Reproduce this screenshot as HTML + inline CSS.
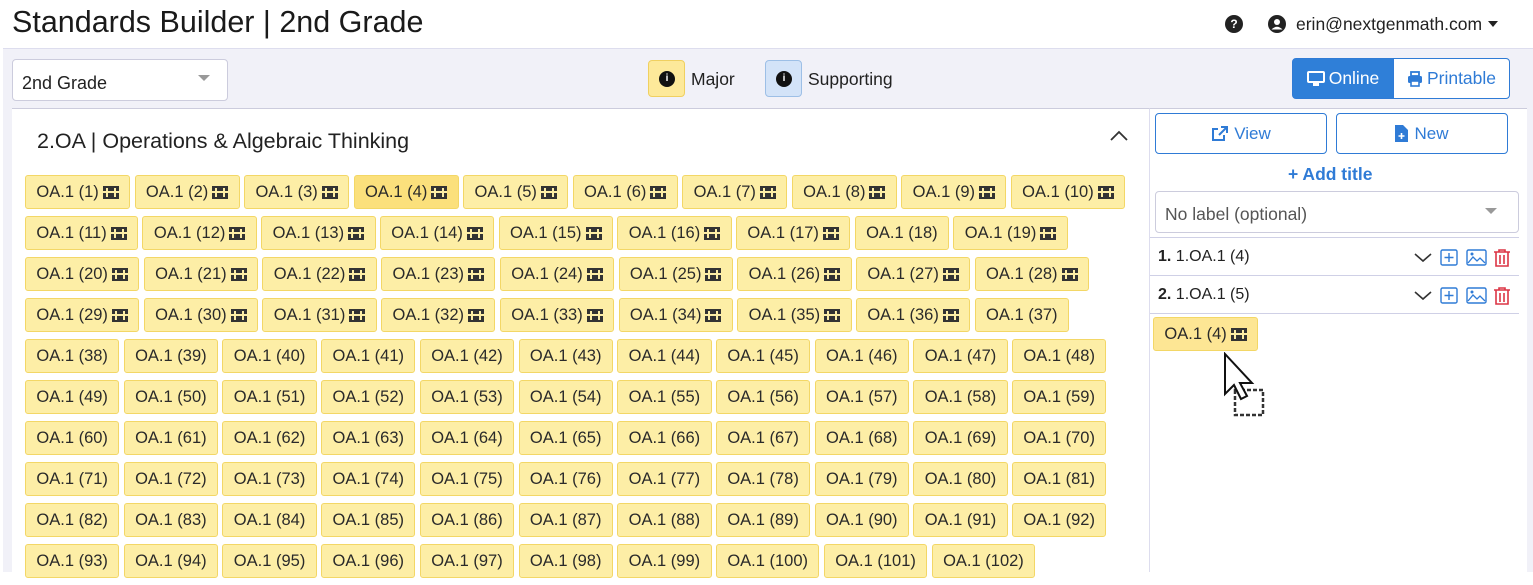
<!DOCTYPE html>
<html><head><meta charset="utf-8"><style>
*{box-sizing:border-box;margin:0;padding:0}
body{width:1533px;height:572px;overflow:hidden;background:#fff;font-family:"Liberation Sans",sans-serif;color:#222;position:relative}
.abs{position:absolute}
.top{left:0;top:0;width:1533px;height:48px;background:#fff}
.bar{left:3px;top:48px;width:1530px;height:524px;background:#f1f1f8;border-top:1px solid #dde}
.left{left:12px;top:108px;width:1137px;height:464px;background:#fff;border-top:1px solid #ccd}
.right{left:1149px;top:108px;width:378px;height:464px;background:#fff;border-left:1px solid #dde;border-top:1px solid #ccd}
.chips{position:absolute;left:25px;top:175px;width:1200px}
.r{display:flex;gap:4.4px;margin-bottom:7px;white-space:nowrap}
.c{height:34px;padding:0 10.4px;background:#fdeea6;border:1px solid #f3d766;border-radius:3px;font-size:16.5px;color:#2a2a2a;white-space:nowrap;display:flex;align-items:center}
.c.s{background:#fbe07c}
.f{display:inline-block;width:16px;height:13px;margin-left:4px;background:#333;position:relative}
.f:before{content:"";position:absolute;left:3px;top:2px;width:10px;height:9px;border-left:2px solid #fdeea6;border-right:2px solid #fdeea6;box-sizing:border-box}
.f:after{content:"";position:absolute;left:0;top:5.5px;width:16px;height:2px;background:#fdeea6}
.btn{border:1px solid #2f7bd6;border-radius:4px;color:#2f7bd6;font-size:17px;display:flex;align-items:center;justify-content:center}
.row{left:1150px;width:369px;height:38px;border-bottom:1px solid #cfd0e6;font-size:16px;display:flex;align-items:center;padding-left:8px}
</style></head><body>
<div class="abs top"></div>
<div class="abs" style="left:12px;top:5px;font-size:30.5px;color:#1a1a1a">Standards Builder | 2nd Grade</div>
<div class="abs" style="left:1225px;top:15px;width:18px;height:18px;border-radius:50%;background:#222;color:#fff;font-size:12px;font-weight:bold;text-align:center;line-height:18px">?</div>
<svg class="abs" style="left:1268px;top:15px" width="18" height="18" viewBox="0 0 18 18"><circle cx="9" cy="9" r="9" fill="#222"/><circle cx="9" cy="7" r="3" fill="#fff"/><path d="M3.5 14.5 Q9 9 14.5 14.5" fill="#fff"/></svg>
<div class="abs" style="left:1296px;top:14px;font-size:17.5px;color:#222">erin@nextgenmath.com</div>
<div class="abs" style="left:1488px;top:21px;border-left:5px solid transparent;border-right:5px solid transparent;border-top:6px solid #222"></div>
<div class="abs bar"></div>
<div class="abs" style="left:12px;top:59px;width:216px;height:42px;background:#fff;border:1px solid #ccd;border-radius:4px;font-size:18px;padding:13px 9px">2nd Grade</div>
<div class="abs" style="left:198px;top:75px;border-left:6px solid transparent;border-right:6px solid transparent;border-top:6px solid #999"></div>
<div class="abs" style="left:648px;top:60px;width:37px;height:37px;background:#fde99a;border:1px solid #f0d060;border-radius:4px"></div>
<div class="abs" style="left:659px;top:71px;width:16px;height:16px;border-radius:50%;background:#111;color:#fff;font-size:10px;font-weight:bold;text-align:center;line-height:16px">i</div>
<div class="abs" style="left:691px;top:69px;font-size:17.5px">Major</div>
<div class="abs" style="left:765px;top:60px;width:37px;height:37px;background:#d3e3f8;border:1px solid #9dbfe6;border-radius:4px"></div>
<div class="abs" style="left:776px;top:71px;width:16px;height:16px;border-radius:50%;background:#111;color:#fff;font-size:10px;font-weight:bold;text-align:center;line-height:16px">i</div>
<div class="abs" style="left:808px;top:69px;font-size:17.5px">Supporting</div>
<div class="abs" style="left:1292px;top:58px;width:102px;height:41px;background:#2f7fd8;border:1px solid #2f7bd6;border-radius:4px 0 0 4px;color:#fff;font-size:17.5px;display:flex;align-items:center;justify-content:center"><svg width="18" height="16" viewBox="0 0 18 16" style="margin-right:4px"><rect x="1" y="1" width="16" height="10" rx="1" fill="none" stroke="#fff" stroke-width="2"/><rect x="6" y="12" width="6" height="3" fill="#fff"/></svg>Online</div>
<div class="abs" style="left:1393px;top:58px;width:117px;height:41px;background:#fff;border:1px solid #2f7bd6;border-radius:0 4px 4px 0;color:#2f7bd6;font-size:17.5px;display:flex;align-items:center;justify-content:center"><svg width="16" height="16" viewBox="0 0 16 16" style="margin-right:4px"><rect x="4" y="1" width="8" height="4" fill="none" stroke="#2f7bd6" stroke-width="1.8"/><rect x="1" y="5" width="14" height="7" rx="1.5" fill="#2f7bd6"/><rect x="4" y="10" width="8" height="5" fill="#fff" stroke="#2f7bd6" stroke-width="1.6"/></svg>Printable</div>
<div class="abs left"></div>
<div class="abs right"></div>
<div class="abs" style="left:37px;top:129px;font-size:21.5px;color:#222">2.OA | Operations &amp; Algebraic Thinking</div>
<svg class="abs" style="left:1110px;top:130px" width="18" height="12" viewBox="0 0 18 12"><path d="M1 10 L9 2 L17 10" fill="none" stroke="#333" stroke-width="1.8"/></svg>
<div class="chips">
<div class="r"><div class="c">OA.1 (1)<i class="f"></i></div><div class="c">OA.1 (2)<i class="f"></i></div><div class="c">OA.1 (3)<i class="f"></i></div><div class="c s">OA.1 (4)<i class="f"></i></div><div class="c">OA.1 (5)<i class="f"></i></div><div class="c">OA.1 (6)<i class="f"></i></div><div class="c">OA.1 (7)<i class="f"></i></div><div class="c">OA.1 (8)<i class="f"></i></div><div class="c">OA.1 (9)<i class="f"></i></div><div class="c">OA.1 (10)<i class="f"></i></div></div>
<div class="r"><div class="c">OA.1 (11)<i class="f"></i></div><div class="c">OA.1 (12)<i class="f"></i></div><div class="c">OA.1 (13)<i class="f"></i></div><div class="c">OA.1 (14)<i class="f"></i></div><div class="c">OA.1 (15)<i class="f"></i></div><div class="c">OA.1 (16)<i class="f"></i></div><div class="c">OA.1 (17)<i class="f"></i></div><div class="c">OA.1 (18)</div><div class="c">OA.1 (19)<i class="f"></i></div></div>
<div class="r"><div class="c">OA.1 (20)<i class="f"></i></div><div class="c">OA.1 (21)<i class="f"></i></div><div class="c">OA.1 (22)<i class="f"></i></div><div class="c">OA.1 (23)<i class="f"></i></div><div class="c">OA.1 (24)<i class="f"></i></div><div class="c">OA.1 (25)<i class="f"></i></div><div class="c">OA.1 (26)<i class="f"></i></div><div class="c">OA.1 (27)<i class="f"></i></div><div class="c">OA.1 (28)<i class="f"></i></div></div>
<div class="r"><div class="c">OA.1 (29)<i class="f"></i></div><div class="c">OA.1 (30)<i class="f"></i></div><div class="c">OA.1 (31)<i class="f"></i></div><div class="c">OA.1 (32)<i class="f"></i></div><div class="c">OA.1 (33)<i class="f"></i></div><div class="c">OA.1 (34)<i class="f"></i></div><div class="c">OA.1 (35)<i class="f"></i></div><div class="c">OA.1 (36)<i class="f"></i></div><div class="c">OA.1 (37)</div></div>
<div class="r"><div class="c">OA.1 (38)</div><div class="c">OA.1 (39)</div><div class="c">OA.1 (40)</div><div class="c">OA.1 (41)</div><div class="c">OA.1 (42)</div><div class="c">OA.1 (43)</div><div class="c">OA.1 (44)</div><div class="c">OA.1 (45)</div><div class="c">OA.1 (46)</div><div class="c">OA.1 (47)</div><div class="c">OA.1 (48)</div></div>
<div class="r"><div class="c">OA.1 (49)</div><div class="c">OA.1 (50)</div><div class="c">OA.1 (51)</div><div class="c">OA.1 (52)</div><div class="c">OA.1 (53)</div><div class="c">OA.1 (54)</div><div class="c">OA.1 (55)</div><div class="c">OA.1 (56)</div><div class="c">OA.1 (57)</div><div class="c">OA.1 (58)</div><div class="c">OA.1 (59)</div></div>
<div class="r"><div class="c">OA.1 (60)</div><div class="c">OA.1 (61)</div><div class="c">OA.1 (62)</div><div class="c">OA.1 (63)</div><div class="c">OA.1 (64)</div><div class="c">OA.1 (65)</div><div class="c">OA.1 (66)</div><div class="c">OA.1 (67)</div><div class="c">OA.1 (68)</div><div class="c">OA.1 (69)</div><div class="c">OA.1 (70)</div></div>
<div class="r"><div class="c">OA.1 (71)</div><div class="c">OA.1 (72)</div><div class="c">OA.1 (73)</div><div class="c">OA.1 (74)</div><div class="c">OA.1 (75)</div><div class="c">OA.1 (76)</div><div class="c">OA.1 (77)</div><div class="c">OA.1 (78)</div><div class="c">OA.1 (79)</div><div class="c">OA.1 (80)</div><div class="c">OA.1 (81)</div></div>
<div class="r"><div class="c">OA.1 (82)</div><div class="c">OA.1 (83)</div><div class="c">OA.1 (84)</div><div class="c">OA.1 (85)</div><div class="c">OA.1 (86)</div><div class="c">OA.1 (87)</div><div class="c">OA.1 (88)</div><div class="c">OA.1 (89)</div><div class="c">OA.1 (90)</div><div class="c">OA.1 (91)</div><div class="c">OA.1 (92)</div></div>
<div class="r"><div class="c">OA.1 (93)</div><div class="c">OA.1 (94)</div><div class="c">OA.1 (95)</div><div class="c">OA.1 (96)</div><div class="c">OA.1 (97)</div><div class="c">OA.1 (98)</div><div class="c">OA.1 (99)</div><div class="c">OA.1 (100)</div><div class="c">OA.1 (101)</div><div class="c">OA.1 (102)</div></div>
</div>
<div class="abs btn" style="left:1155px;top:113px;width:172px;height:41px"><svg width="18" height="16" viewBox="0 0 18 16" style="margin-right:5px"><path d="M7 3H2v11h11V9" fill="none" stroke="#2f7bd6" stroke-width="2"/><path d="M10 1h6v6M16 1 8 9" fill="none" stroke="#2f7bd6" stroke-width="2"/></svg>View</div>
<div class="abs btn" style="left:1336px;top:113px;width:172px;height:41px"><svg width="13" height="17" viewBox="0 0 13 17" style="margin-right:6px"><path d="M0 0h8l5 5v12H0z" fill="#2f7bd6"/><path d="M6.5 8v6M3.5 11h6" stroke="#fff" stroke-width="1.6"/></svg>New</div>
<div class="abs" style="left:1288px;top:164px;font-size:17.5px;font-weight:bold;color:#2f7bd6">+ Add title</div>
<div class="abs" style="left:1155px;top:191px;width:364px;height:42px;border:1px solid #ccd;border-radius:4px;font-size:17.5px;color:#555;padding:12px 9px">No label (optional)</div>
<div class="abs" style="left:1485px;top:208px;border-left:6px solid transparent;border-right:6px solid transparent;border-top:6px solid #999"></div>
<div class="abs" style="left:1150px;top:237px;width:369px;border-top:1px solid #cfd0e6"></div>
<div class="abs row" style="top:238px"><b>1.</b>&nbsp;1.OA.1 (4)</div>
<div class="abs row" style="top:276px"><b>2.</b>&nbsp;1.OA.1 (5)</div>
<svg class="abs" style="left:1413px;top:249px" width="102" height="60" viewBox="0 0 102 60">
<g id="ic"><path d="M2 5l8 7 8-7" fill="none" stroke="#333" stroke-width="1.6"/><rect x="28" y="1" width="16" height="15" rx="1.5" fill="none" stroke="#2f7bd6" stroke-width="1.4"/><path d="M36 4v9M31.5 8.5h9" stroke="#2f7bd6" stroke-width="1.4"/><rect x="54" y="1" width="19" height="15" rx="1.5" fill="none" stroke="#2f7bd6" stroke-width="1.4"/><path d="M55 14l5-6 4 4 3-3 5 5" fill="none" stroke="#2f7bd6" stroke-width="1.3"/><circle cx="59" cy="5" r="1.5" fill="#2f7bd6"/><path d="M81 3h16M86 3V1h6v2M83 3v14h12V3M87 6v9M91 6v9" fill="none" stroke="#dc3545" stroke-width="1.6"/></g>
<use href="#ic" y="38"/></svg>
<div class="abs c s" style="left:1153px;top:317px;background:#fde694">OA.1 (4)<i class="f" style="background:#333"></i></div>
<svg class="abs" style="left:1222px;top:352px" width="50" height="70" viewBox="0 0 50 70"><rect x="13" y="38" width="28" height="25" fill="none" stroke="#333" stroke-width="2.5" stroke-dasharray="4 2"/><path d="M3 2v40l9-9 7 14 6-3-7-13h12z" fill="#fff" stroke="#111" stroke-width="2"/></svg>
</body></html>
